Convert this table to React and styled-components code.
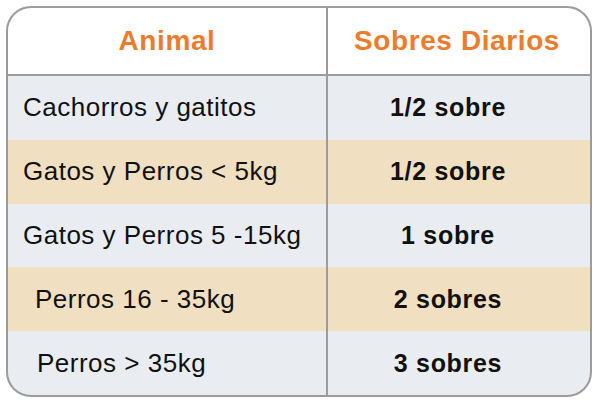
import { Fragment } from "react";
import styled, { createGlobalStyle } from "styled-components";

const GlobalStyle = createGlobalStyle`
    body {
        margin: 0;
        background: #fff;
        font-family: "Liberation Sans", Arial, sans-serif;
    }
`;

const Page = styled.div`
    padding: 6px 8px 0 6px;
`;

const Table = styled.div`
    width: 586px;
    height: 391px;
    box-sizing: border-box;
    border: 2px solid #9c9c9c;
    border-radius: 25px;
    overflow: hidden;
    display: grid;
    grid-template-columns: 318px 2px 1fr;
    grid-template-rows: 66px 2px repeat(5, 1fr);
    background: #9c9c9c;
`;

const HeadCell = styled.div`
    background: #fff;
    color: #ee7b2c;
    font-weight: bold;
    font-size: 28px;
    letter-spacing: 0.6px;
    display: flex;
    align-items: center;
    justify-content: center;
    padding-right: ${({ shift }) => shift || 0}px;
`;

const Line = styled.div`
    background: #9c9c9c;
    grid-column: ${({ full }) => (full ? "1 / -1" : "auto")};
`;

const Cell = styled.div`
    background: ${({ alt }) => (alt ? "#f1dfc2" : "#e9edf2")};
    color: #111;
    display: flex;
    align-items: center;
    font-size: 26px;
    letter-spacing: 0.5px;
    padding-left: ${({ indent }) => indent}px;
`;

const Amount = styled(Cell)`
    justify-content: center;
    font-weight: bold;
    font-size: 25px;
    letter-spacing: 0.7px;
    padding: 0 22px 0 0;
`;

const rows = [
    { animal: "Cachorros y gatitos", amount: "1/2 sobre", indent: 15 },
    { animal: "Gatos y Perros < 5kg", amount: "1/2 sobre", indent: 15 },
    { animal: "Gatos y Perros 5 -15kg", amount: "1 sobre", indent: 15 },
    { animal: "Perros 16 - 35kg", amount: "2 sobres", indent: 27 },
    { animal: "Perros > 35kg", amount: "3 sobres", indent: 29 },
];

export default function App() {
    return (
        <Page>
            <GlobalStyle />
            <Table>
                <HeadCell>Animal</HeadCell>
                <Line />
                <HeadCell shift={4}>Sobres Diarios</HeadCell>
                <Line full />
                {rows.map((row, i) => (
                    <Fragment key={i}>
                        <Cell alt={i % 2 === 1} indent={row.indent}>{row.animal}</Cell>
                        <Line />
                        <Amount alt={i % 2 === 1}>{row.amount}</Amount>
                    </Fragment>
                ))}
            </Table>
        </Page>
    );
}
